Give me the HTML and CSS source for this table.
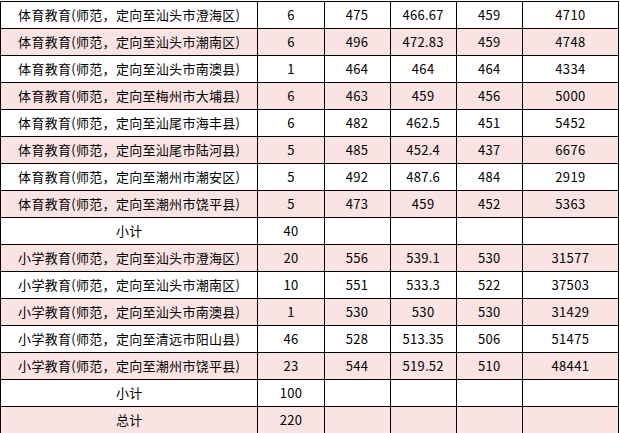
FILE: index.html
```html
<!DOCTYPE html>
<html lang="zh-CN">
<head>
<meta charset="utf-8">
<title>录取分数表</title>
<link rel="stylesheet" href="styles.css">
</head>
<body>
<table class="score-table">
  <colgroup>
    <col class="c-name"><col class="c-num"><col class="c-num"><col class="c-num"><col class="c-num"><col class="c-rank">
  </colgroup>
  <tbody>
    <tr><td>体育教育(师范，定向至汕头市澄海区)</td><td>6</td><td>475</td><td>466.67</td><td>459</td><td>4710</td></tr>
    <tr class="alt"><td>体育教育(师范，定向至汕头市潮南区)</td><td>6</td><td>496</td><td>472.83</td><td>459</td><td>4748</td></tr>
    <tr><td>体育教育(师范，定向至汕头市南澳县)</td><td>1</td><td>464</td><td>464</td><td>464</td><td>4334</td></tr>
    <tr class="alt"><td>体育教育(师范，定向至梅州市大埔县)</td><td>6</td><td>463</td><td>459</td><td>456</td><td>5000</td></tr>
    <tr><td>体育教育(师范，定向至汕尾市海丰县)</td><td>6</td><td>482</td><td>462.5</td><td>451</td><td>5452</td></tr>
    <tr class="alt"><td>体育教育(师范，定向至汕尾市陆河县)</td><td>5</td><td>485</td><td>452.4</td><td>437</td><td>6676</td></tr>
    <tr><td>体育教育(师范，定向至潮州市潮安区)</td><td>5</td><td>492</td><td>487.6</td><td>484</td><td>2919</td></tr>
    <tr class="alt"><td>体育教育(师范，定向至潮州市饶平县)</td><td>5</td><td>473</td><td>459</td><td>452</td><td>5363</td></tr>
    <tr><td>小计</td><td>40</td><td></td><td></td><td></td><td></td></tr>
    <tr class="alt"><td>小学教育(师范，定向至汕头市澄海区)</td><td>20</td><td>556</td><td>539.1</td><td>530</td><td>31577</td></tr>
    <tr><td>小学教育(师范，定向至汕头市潮南区)</td><td>10</td><td>551</td><td>533.3</td><td>522</td><td>37503</td></tr>
    <tr class="alt"><td>小学教育(师范，定向至汕头市南澳县)</td><td>1</td><td>530</td><td>530</td><td>530</td><td>31429</td></tr>
    <tr><td>小学教育(师范，定向至清远市阳山县)</td><td>46</td><td>528</td><td>513.35</td><td>506</td><td>51475</td></tr>
    <tr class="alt"><td>小学教育(师范，定向至潮州市饶平县)</td><td>23</td><td>544</td><td>519.52</td><td>510</td><td>48441</td></tr>
    <tr><td>小计</td><td>100</td><td></td><td></td><td></td><td></td></tr>
    <tr class="alt"><td>总计</td><td>220</td><td></td><td></td><td></td><td></td></tr>
  </tbody>
</table>
</body>
</html>
```
FILE: styles.css
```css
html, body {
  margin: 0;
  padding: 0;
  background: #ffffff;
}
body {
  padding-top: 1px;
  font-family: "Noto Sans CJK SC", "Noto Sans", sans-serif;
  font-size: 13px;
  color: #000000;
}
.score-table {
  border-collapse: collapse;
  table-layout: fixed;
  width: 619px;
}
.c-name { width: 257px; }
.c-num { width: 66px; }
.c-rank { width: 96px; }
.score-table td {
  border: 1px solid #000000;
  height: 26px;
  padding: 0;
  text-align: center;
  vertical-align: middle;
  line-height: 16px;
  letter-spacing: 0.3px;
  white-space: nowrap;
  overflow: hidden;
}
.score-table tr.alt td {
  background: #f9e3e3;
}
```
